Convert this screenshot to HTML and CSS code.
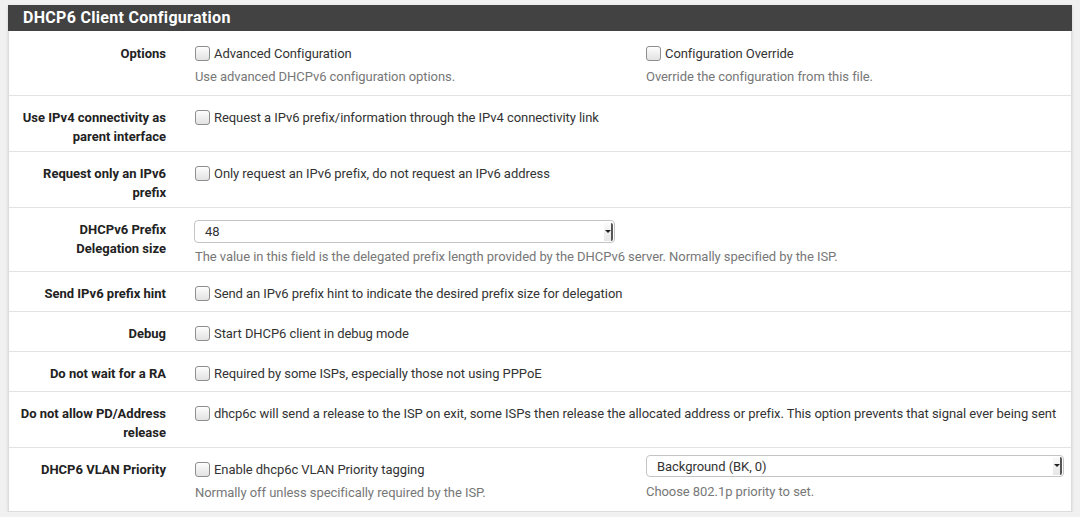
FILE: index.html
```html
<!DOCTYPE html>
<html lang="en">
<head>
    <meta charset="UTF-8">
    <meta name="viewport" content="width=device-width, initial-scale=1.0">
    <title>DHCP6 Client Configuration</title>
    <link rel="stylesheet" href="styles.css">
</head>
<body>
    <div class="panel">
        <h2 class="panel-heading">DHCP6 Client Configuration</h2>

        <div class="form-row first">
            <div class="form-label">Options</div>
            <div class="form-ctl split">
                <div>
                    <label class="check"><span class="box"></span>Advanced Configuration</label>
                    <div class="help">Use advanced DHCPv6 configuration options.</div>
                </div>
                <div>
                    <label class="check"><span class="box"></span>Configuration Override</label>
                    <div class="help">Override the configuration from this file.</div>
                </div>
            </div>
        </div>

        <div class="form-row">
            <div class="form-label">Use IPv4 connectivity as parent interface</div>
            <div class="form-ctl">
                <label class="check"><span class="box"></span>Request a IPv6 prefix/information through the IPv4 connectivity link</label>
            </div>
        </div>

        <div class="form-row">
            <div class="form-label">Request only an IPv6 prefix</div>
            <div class="form-ctl">
                <label class="check"><span class="box"></span>Only request an IPv6 prefix, do not request an IPv6 address</label>
            </div>
        </div>

        <div class="form-row">
            <div class="form-label">DHCPv6 Prefix Delegation size</div>
            <div class="form-ctl">
                <div class="select narrow"><span class="select-val">48</span><span class="select-btn"></span></div>
                <div class="help after-select">The value in this field is the delegated prefix length provided by the DHCPv6 server. Normally specified by the ISP.</div>
            </div>
        </div>

        <div class="form-row">
            <div class="form-label">Send IPv6 prefix hint</div>
            <div class="form-ctl">
                <label class="check"><span class="box"></span>Send an IPv6 prefix hint to indicate the desired prefix size for delegation</label>
            </div>
        </div>

        <div class="form-row">
            <div class="form-label">Debug</div>
            <div class="form-ctl">
                <label class="check"><span class="box"></span>Start DHCP6 client in debug mode</label>
            </div>
        </div>

        <div class="form-row">
            <div class="form-label">Do not wait for a RA</div>
            <div class="form-ctl">
                <label class="check"><span class="box"></span>Required by some ISPs, especially those not using PPPoE</label>
            </div>
        </div>

        <div class="form-row">
            <div class="form-label">Do not allow PD/Address release</div>
            <div class="form-ctl">
                <label class="check"><span class="box"></span>dhcp6c will send a release to the ISP on exit, some ISPs then release the allocated address or prefix. This option prevents that signal ever being sent</label>
            </div>
        </div>

        <div class="form-row">
            <div class="form-label">DHCP6 VLAN Priority</div>
            <div class="form-ctl split">
                <div>
                    <label class="check"><span class="box"></span>Enable dhcp6c VLAN Priority tagging</label>
                    <div class="help">Normally off unless specifically required by the ISP.</div>
                </div>
                <div class="raise">
                    <div class="select"><span class="select-val">Background (BK, 0)</span><span class="select-btn"></span></div>
                    <div class="help after-select">Choose 802.1p priority to set.</div>
                </div>
            </div>
        </div>
    </div>
</body>
</html>
```

FILE: styles.css
```css
* {
    box-sizing: border-box;
    margin: 0;
    padding: 0;
}

body {
    font-family: Roboto, "Liberation Sans", sans-serif;
    font-size: 13px;
    line-height: 19px;
    color: #333;
    background-color: #f1f1f1;
    padding: 5px 8px 0 8px;
}

.panel {
    background-color: #fff;
    border: 1px solid #dcdcdc;
    border-top: none;
    box-shadow: 0 1px 3px rgba(0, 0, 0, 0.12);
}

.panel-heading {
    background-color: #424242;
    color: #fff;
    font-size: 16px;
    font-weight: 700;
    line-height: 26px;
    height: 26px;
    padding-left: 15px;
    letter-spacing: 0.3px;
    margin: 0 -1px;
}

.form-row {
    display: flex;
    padding-top: 12px;
    border-top: 1px solid #e3e3e3;
}

.form-row.first {
    border-top: none;
    padding-top: 13px;
}

.form-label {
    width: 171px;
    flex-shrink: 0;
    padding-left: 8px;
    padding-right: 14px;
    padding-bottom: 5px;
    text-align: right;
    font-weight: 700;
    color: #222;
}

.form-ctl {
    flex: 1;
    padding-left: 15px;
    padding-right: 7px;
    letter-spacing: -0.06px;
}

.split {
    display: grid;
    grid-template-columns: 420px 1fr;
    column-gap: 31px;
}

.check {
    display: flex;
    align-items: center;
    height: 19px;
    margin-bottom: 8px;
    color: #333;
    white-space: nowrap;
}

.box {
    display: inline-block;
    width: 15px;
    height: 15px;
    margin-right: 4px;
    border: 1px solid #8e8e8e;
    border-radius: 3px;
    background: linear-gradient(#fdfdfd, #e2e2e2);
    flex-shrink: 0;
}

.help {
    color: #777;
    margin-top: -4px;
    margin-bottom: 9px;
}

.help.after-select {
    margin-top: 4px;
    margin-bottom: 5px;
}

.raise {
    margin-top: -5px;
}

.raise .help.after-select {
    margin-top: 5px;
    margin-bottom: 9px;
}

.select {
    display: flex;
    align-items: center;
    height: 22px;
    border: 1px solid #c4c4c4;
    border-radius: 4px;
    background-color: #fff;
    color: #333;
    padding-left: 10px;
}

.select.narrow {
    width: 421px;
    margin-left: -1px;
    height: 23px;
}

.select-val {
    flex: 1;
}

.select-btn {
    width: 9px;
    height: 18px;
    margin-right: 1px;
    border-right: 2px solid #555;
    border-radius: 0 2px 2px 0;
    background: linear-gradient(#fafafa, #e6e6e6);
    position: relative;
}

.select-btn::after {
    content: "";
    position: absolute;
    left: 1px;
    top: 7px;
    border-left: 3px solid transparent;
    border-right: 3px solid transparent;
    border-top: 3px solid #222;
}
```
